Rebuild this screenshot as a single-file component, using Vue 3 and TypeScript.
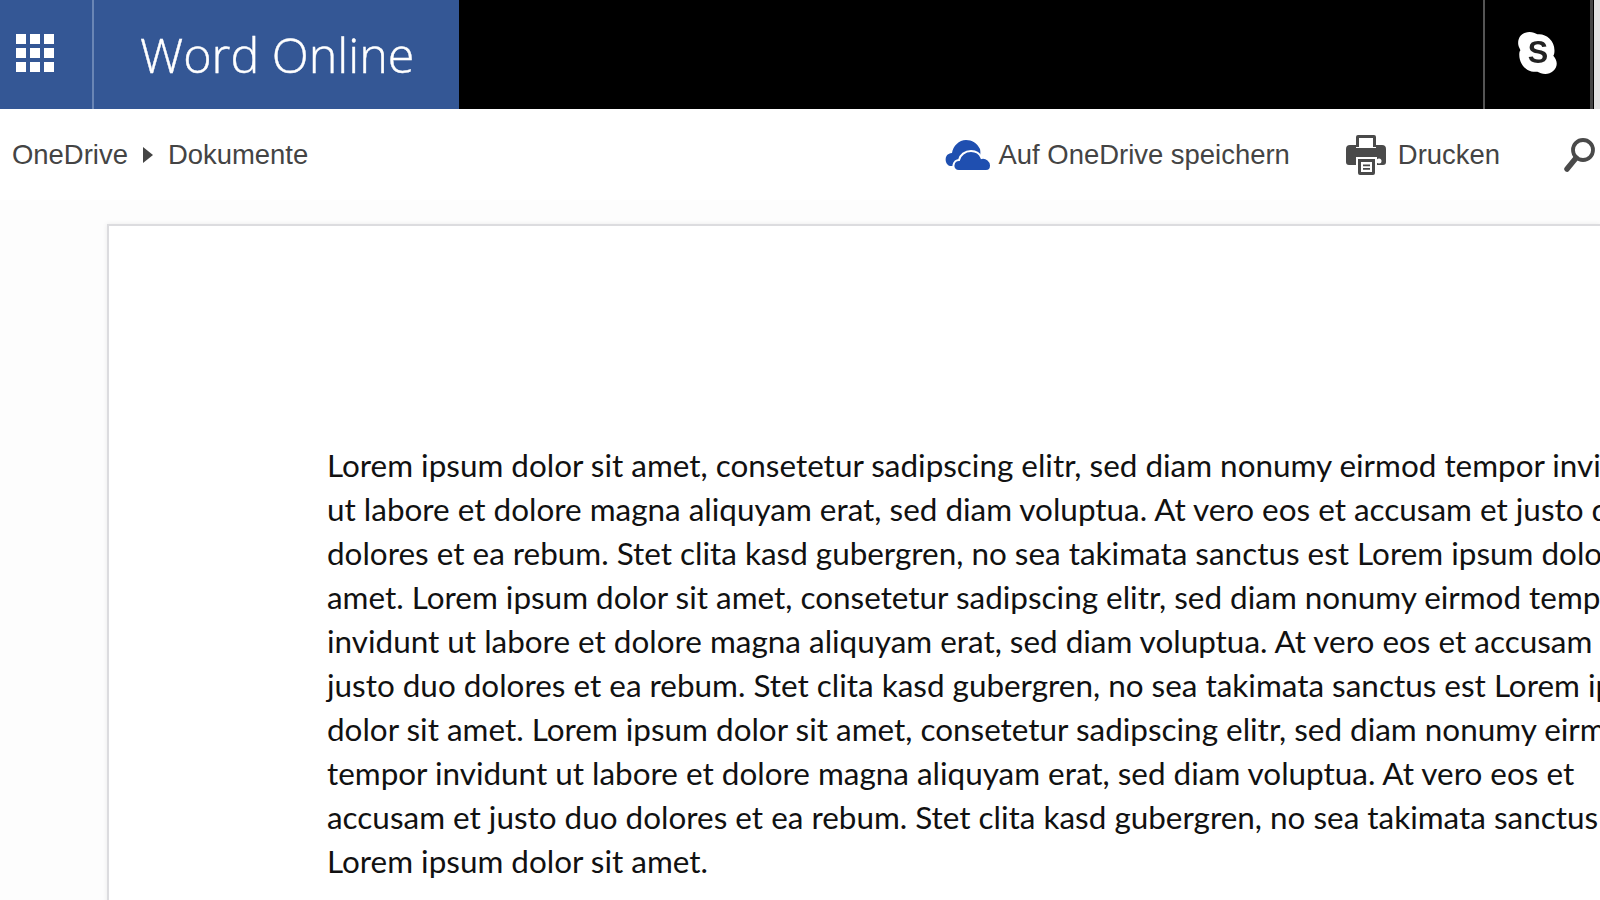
<script setup lang="ts">
const lines: string[] = [
  "Lorem ipsum dolor sit amet, consetetur sadipscing elitr, sed diam nonumy eirmod tempor invidunt",
  "ut labore et dolore magna aliquyam erat, sed diam voluptua. At vero eos et accusam et justo duo",
  "dolores et ea rebum. Stet clita kasd gubergren, no sea takimata sanctus est Lorem ipsum dolor sit",
  "amet. Lorem ipsum dolor sit amet, consetetur sadipscing elitr, sed diam nonumy eirmod tempor",
  "invidunt ut labore et dolore magna aliquyam erat, sed diam voluptua. At vero eos et accusam et",
  "justo duo dolores et ea rebum. Stet clita kasd gubergren, no sea takimata sanctus est Lorem ipsum",
  "dolor sit amet. Lorem ipsum dolor sit amet, consetetur sadipscing elitr, sed diam nonumy eirmod",
  "tempor invidunt ut labore et dolore magna aliquyam erat, sed diam voluptua. At vero eos et",
  "accusam et justo duo dolores et ea rebum. Stet clita kasd gubergren, no sea takimata sanctus est",
  "Lorem ipsum dolor sit amet.",
];
const tiles: number[] = [0, 1, 2, 3, 4, 5, 6, 7, 8];
</script>

<template>
  <div class="app">
    <header class="topbar">
      <div class="brand">
        <button class="waffle" aria-label="Apps">
          <span class="grid"><i v-for="t in tiles" :key="t"></i></span>
        </button>
        <div class="title">Word Online</div>
      </div>
      <div class="spacer"></div>
      <button class="skype" aria-label="Skype">
        <svg class="soft" width="42" height="42" viewBox="3 2 35 37">
          <path fill="#fff" d="M13 2c3 0 5 1 7 2 7-1 15 5 15 14 0 2 0 3-1 5 2 2 3 5 3 7 0 5-5 9-10 9-3 0-5-1-7-2-9 1-16-6-16-15 0-1 0-3 1-4-1-2-2-4-2-6 0-6 4-10 10-10z"/>
          <text x="20.500" y="29" text-anchor="middle" class="skype-s">S</text>
        </svg>
      </button>
      <div class="edge"></div>
    </header>

    <nav class="toolbar">
      <div class="crumbs">
        <span>OneDrive</span>
        <svg class="caret" width="10" height="16" viewBox="0 0 10 16"><path d="M0 0l10 8-10 8z" fill="#444"/></svg>
        <span>Dokumente</span>
      </div>
      <div class="actions">
        <a class="action save">
          <svg class="soft" width="46" height="32" viewBox="0 0 46 32">
            <path fill="#1f4fb0" d="M5 27C1 26 0 21 1 18c1-3 4-4 6-4C8 7 14 1 21 1c6 0 11 3 14 9 1 4 0 11-2 17z"/>
            <path fill="#1f4fb0" stroke="#fff" stroke-width="2" d="M14 32c-4 0-6-3-5.500-6 .5-3 3-5 5.500-5 1-5 6-9 12-9 5 0 9 3 10.500 7 5-1 9.500 3 9.500 7.500 0 3-2 5.500-5 5.500z"/>
          </svg>
          <span>Auf OneDrive speichern</span>
        </a>
        <a class="action print">
          <svg class="soft" width="40" height="40" viewBox="0 0 40 40">
            <path fill="#4a4a4a" d="M12 0h16a2 2 0 0 1 2 2v10h-3V3H13v9h-3V2a2 2 0 0 1 2-2z"/>
            <path fill="#4a4a4a" d="M4 10h6v3h20v-3h6a4 4 0 0 1 4 4v13a3 3 0 0 1-3 3H3a3 3 0 0 1-3-3V14a4 4 0 0 1 4-4z"/>
            <circle cx="33" cy="26" r="2.500" fill="#fff"/>
            <path fill="#fff" d="M10 22h21v18H10z"/>
            <path fill="#4a4a4a" fill-rule="evenodd" d="M12 24h17v14a2 2 0 0 1-2 2H14a2 2 0 0 1-2-2zM15 27v10h11V27z"/>
            <path fill="#4a4a4a" d="M17 29.500h7v1.800h-7zM17 33h7v1.800h-7z"/>
          </svg>
          <span>Drucken</span>
        </a>
        <a class="action search" aria-label="Suchen">
          <svg class="soft" width="34" height="36" viewBox="0 0 34 36">
            <circle cx="21" cy="13" r="10" fill="none" stroke="#4a4a4a" stroke-width="3.800"/>
            <path d="M14 21L5 32" stroke="#4a4a4a" stroke-width="5.500" stroke-linecap="round"/>
          </svg>
        </a>
      </div>
    </nav>

    <main class="canvas">
      <section class="sheet">
        <p v-for="line in lines" :key="line" class="line">{{ line }}</p>
      </section>
    </main>
  </div>
</template>

<style scoped>
.app {
  width: 1600px;
  height: 900px;
  display: flex;
  flex-direction: column;
  overflow: hidden;
  background: #fff;
}
.topbar {
  height: 109px;
  flex: none;
  display: flex;
  background: #000;
}
.brand {
  width: 459px;
  display: flex;
  background: #345795;
}
.waffle {
  width: 94px;
  padding: 0 0 4px 16px;
  display: flex;
  align-items: center;
  border: none;
  border-right: 2px solid #6a86b5;
  background: none;
}
.grid {
  display: grid;
  grid-template-columns: repeat(3, 10px);
  grid-auto-rows: 10px;
  gap: 4px;
}
.grid i {
  background: #fff;
}
.title {
  padding: 0 0 0 46px;
  font: 300 48.4px/108px "Open Sans", sans-serif;
  color: #fff;
  -webkit-text-stroke: 0.4px #fff;
}
.spacer {
  flex: 1;
}
.skype {
  box-sizing: border-box;
  width: 107px;
  padding: 0 0 4px;
  display: flex;
  align-items: center;
  justify-content: center;
  border: none;
  border-left: 2px solid #555;
  background: none;
}
.skype-s {
  font: 700 27px "Liberation Sans", sans-serif;
  fill: #222;
}
.soft {
  filter: blur(0.5px);
}
.edge {
  box-sizing: border-box;
  width: 10px;
  border-left: 3px solid #444;
  background: linear-gradient(90deg, #000 1px, #e2e2e2 1px);
}
.toolbar {
  height: 90px;
  flex: none;
  display: flex;
  align-items: center;
  justify-content: space-between;
  padding: 1px 0 0 12px;
  font: 27.45px "Liberation Sans", sans-serif;
  color: #444;
}
.crumbs {
  display: flex;
  align-items: center;
  gap: 15px;
}
.actions {
  display: flex;
  align-items: center;
}
.action {
  display: flex;
  align-items: center;
  gap: 8px;
}
.print {
  margin-left: 56px;
  gap: 12px;
}
.search {
  margin-left: 62px;
  margin-right: 4px;
}
.canvas {
  flex: 1;
  padding: 24px 0 0 107px;
  background: #fdfdfd;
}
.sheet {
  height: 100%;
  padding: 217px 0 0 218px;
  border-top: 2px solid #dcdcdf;
  border-left: 2px solid #dcdcdf;
  background: #fff;
  box-shadow: 0 0 5px rgba(0, 0, 0, 0.08);
  overflow: hidden;
}
.line {
  margin: 0;
  height: 44px;
  white-space: nowrap;
  font: 31.45px/44px Lato, sans-serif;
  color: #111;
}
</style>
